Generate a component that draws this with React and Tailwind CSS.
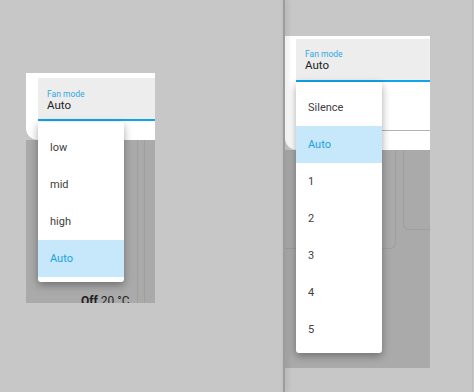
import React from 'react';

// menu item list for each screenshot
const leftOptions = ['low', 'mid', 'high', 'Auto'];
const rightOptions = ['Silence', 'Auto', '1', '2', '3', '4', '5'];

function FanField({ pad }) {
    return (
        <div className={`h-[43px] bg-[#ededed] border-b-2 border-[#0ea5e9] pl-[9px] ${pad}`}>
            <div className="text-[8.5px] leading-[10px] text-[#2fa8e3]">Fan mode</div>
            <div className="text-[11.5px] leading-[13px] text-[#222]">Auto</div>
        </div>
    );
}

function Menu({ options, selected, className }) {
    return (
        <div className={`absolute w-[86px] bg-white rounded-[3px] pt-[7px] pb-[5px] shadow-[0_3px_8px_rgba(0,0,0,0.35)] z-10 ${className}`}>
            {options.map((o) => (
                <div
                    key={o}
                    className={`h-[37px] flex items-center pt-[2px] px-[12px] text-[11px] ${o === selected ? 'bg-[#c6e8fa] text-[#1e9fe0]' : 'text-[#404040]'}`}
                >
                    {o}
                </div>
            ))}
        </div>
    );
}

export default function App() {
    return (
        <div className="w-[474px] h-[392px] flex bg-[#c7c7c7] overflow-hidden" style={{ fontFamily: 'Roboto, "Noto Sans", sans-serif' }}>
            {/* left screenshot */}
            <div className="w-[283px] h-full pt-[73px] pl-[26px]">
                <div className="relative w-[129px] flex flex-col">
                    <div className="h-[67px] bg-white rounded-bl-[12px] pt-[5px] pl-[12px]">
                        <FanField pad="pt-[11px]" />
                    </div>
                    <div className="relative h-[163px] bg-[#aaaaaa] flex overflow-hidden">
                        <div className="w-[112px] h-full border-r border-[#9f9f9f]"></div>
                        <div className="ml-[6px] flex-1 h-full border-l border-[#9f9f9f]"></div>
                        <div className="absolute left-[55px] top-[154px] text-[12px] leading-[14px] text-[#1f1f1f] whitespace-nowrap">
                            <span className="font-bold">Off</span> 20 °C
                        </div>
                    </div>
                    <Menu options={leftOptions} selected="Auto" className="left-[12px] top-[49px]" />
                </div>
            </div>

            {/* divider */}
            <div className="w-[2px] h-full bg-[#9c9c9c] relative z-20 shadow-[2px_0_5px_rgba(0,0,0,0.18)]"></div>

            {/* right screenshot */}
            <div className="flex-1 h-full flex">
                <div className="w-[145px] pt-[36px]">
                    <div className="relative flex flex-col">
                        <div className="h-[114px] bg-white rounded-bl-[12px] pt-[3px] pl-[11px]">
                            <FanField pad="pt-[10px]" />
                            <div className="h-[49px] border-b border-[#b3b3b3]"></div>
                        </div>
                        <div className="h-[218px] bg-[#aaaaaa] flex items-start">
                            <div className="w-[111px] h-[99px] border-r border-b border-[#9f9f9f] rounded-br-[6px]"></div>
                            <div className="ml-[7px] flex-1 h-[80px] border-l border-b border-[#9f9f9f] rounded-bl-[6px]"></div>
                        </div>
                        <Menu options={rightOptions} selected="Auto" className="left-[11px] top-[46px]" />
                    </div>
                </div>
                <div className="flex-1"></div>
                <div className="w-px h-full bg-[#bdbdbd] mr-[1px]"></div>
            </div>
        </div>
    );
}
